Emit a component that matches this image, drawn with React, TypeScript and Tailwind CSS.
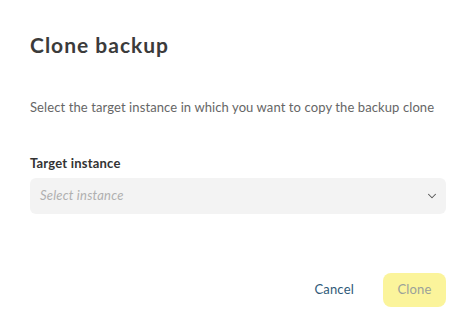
import { ChevronDown } from 'lucide-react'

export default function App() {
  return (
    <div className="flex h-[336px] w-[474px] flex-col bg-white pl-[30px] pr-[28px] pt-[30px] font-['Lato',sans-serif] text-[#3a3a3a]">
      <h1 className="m-0 text-[21px] font-bold leading-[30px] tracking-[1px] text-[#3b3b3b]">Clone backup</h1>
      <p className="m-0 mt-[38px] text-[13px] leading-[18px] tracking-[0.1px] text-[#666]">
        Select the target instance in which you want to copy the backup clone
      </p>
      <div className="mt-[38px] flex flex-col">
        <label className="text-[13px] font-bold leading-[18px] tracking-[0.2px] text-[#333]">Target instance</label>
        <button
          type="button"
          className="mt-[6px] flex h-9 w-full items-center justify-between rounded-md bg-[#f3f3f3] pl-[10px] pr-[7px] text-left"
        >
          <span className="text-[13px] italic tracking-[0.2px] text-[#b0b0b0]">Select instance</span>
          <ChevronDown size={14} strokeWidth={1.8} className="text-[#555]" />
        </button>
      </div>
      <div className="mt-[59px] flex items-center justify-end gap-[29px]">
        <button type="button" className="text-[13px] tracking-[0.2px] text-[#2f5a78]">
          Cancel
        </button>
        <button
          type="button"
          className="h-[34px] w-[63px] rounded-lg bg-[#fbf49b] text-[13px] tracking-[0.2px] text-[#9aa19a]"
        >
          Clone
        </button>
      </div>
    </div>
  )
}
